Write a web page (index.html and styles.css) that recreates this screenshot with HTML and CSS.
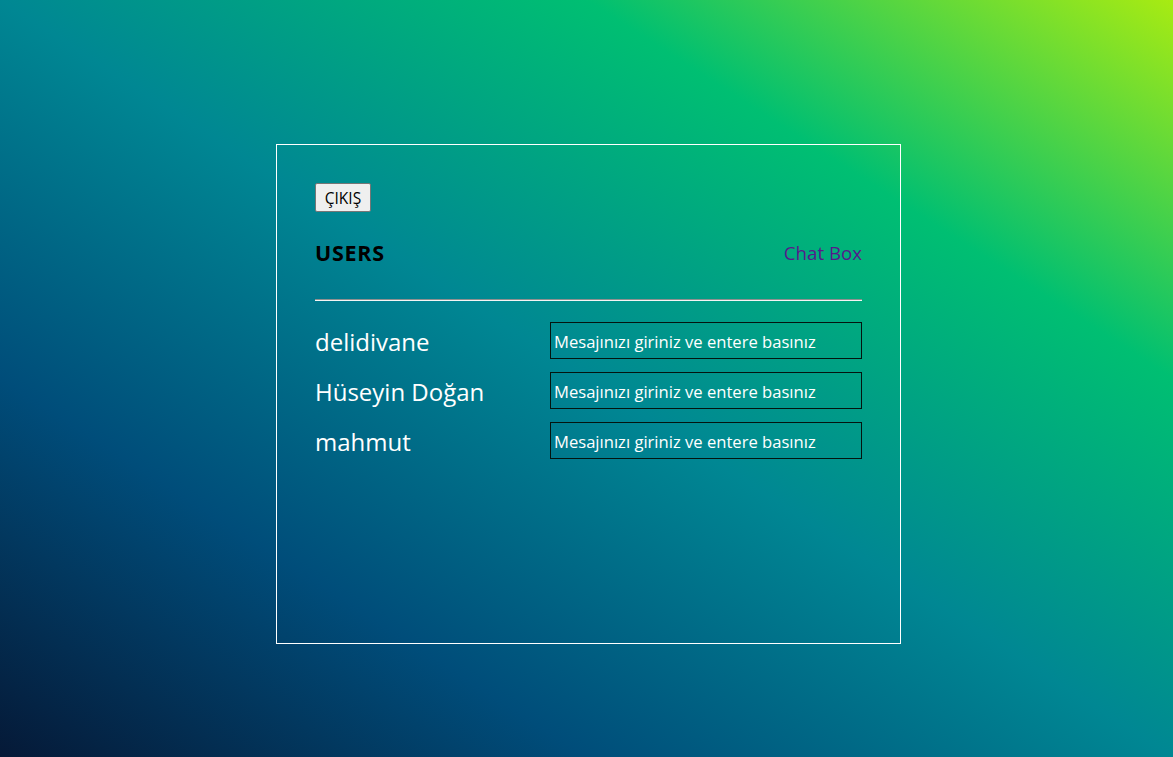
FILE: index.html
```html
<!DOCTYPE html>
<html lang="tr">
<head>
<meta charset="utf-8">
<title>Chat</title>
<link rel="stylesheet" href="styles.css">
</head>
<body>
<div class="panel">
  <button class="logout">ÇIKIŞ</button>
  <div class="header">
    <h3 class="title">USERS</h3>
    <a class="chat-link" href="#">Chat Box</a>
  </div>
  <hr class="divider">
  <ul class="users">
    <li class="user-row">
      <span class="user-name">delidivane</span>
      <input class="msg" type="text" placeholder="Mesajınızı giriniz ve entere basınız">
    </li>
    <li class="user-row">
      <span class="user-name">Hüseyin Doğan</span>
      <input class="msg" type="text" placeholder="Mesajınızı giriniz ve entere basınız">
    </li>
    <li class="user-row">
      <span class="user-name">mahmut</span>
      <input class="msg" type="text" placeholder="Mesajınızı giriniz ve entere basınız">
    </li>
  </ul>
</div>
</body>
</html>
```
FILE: styles.css
```css
html, body {
  margin: 0;
  height: 100%;
}
body {
  background-image: linear-gradient(to right top, #051937, #004d7a, #008793, #00bf72, #a8eb12);
  font-family: "Open Sans", "Noto Sans", sans-serif;
  overflow: hidden;
}
.panel {
  box-sizing: border-box;
  width: 625px;
  height: 500px;
  margin: 144px 0 0 276px;
  border: 1px solid #fff;
  padding: 38px 38px;
  display: flex;
  flex-direction: column;
  align-items: stretch;
}
.logout {
  align-self: flex-start;
  height: 29px;
  width: 56px;
  padding: 0;
  font-family: inherit;
  font-size: 15.5px;
  background: #efefef;
  border: 1px solid #767676;
  border-radius: 2px;
  color: #000;
}
.header {
  display: flex;
  justify-content: space-between;
  align-items: center;
  margin-top: 26px;
  height: 28px;
}
.title {
  margin: 0;
  font-size: 21.5px;
  font-weight: 700;
  color: #000;
  letter-spacing: 0.7px;
}
.chat-link {
  color: #551a8b;
  text-decoration: none;
  font-size: 18.7px;
  font-weight: 400;
}
.divider {
  margin: 33px 0 0;
  border: 0;
  border-top: 1px solid #8f8f8f;
  border-bottom: 1px solid #f4f4f4;
  height: 0;
}
.users {
  list-style: none;
  margin: 21px 0 0;
  padding: 0;
  display: flex;
  flex-direction: column;
  gap: 13px;
}
.user-row {
  display: grid;
  grid-template-columns: 235px 1fr;
  align-items: center;
  height: 37px;
}
.user-name {
  color: #fff;
  font-size: 24px;
  line-height: 37px;
  position: relative;
  top: 1px;
}
.msg {
  box-sizing: border-box;
  height: 37px;
  width: 312px;
  border: 1px solid #04140f;
  background: transparent;
  color: #fff;
  font-family: inherit;
  font-size: 16.6px;
  padding: 2px 3px 0;
  outline: none;
}
.msg::placeholder {
  color: #fff;
  opacity: 1;
}
```
